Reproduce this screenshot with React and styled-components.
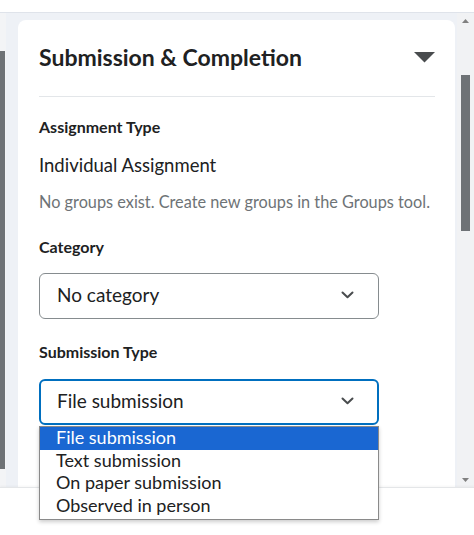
import styled, { createGlobalStyle } from 'styled-components';

const GlobalStyle = createGlobalStyle`
    html, body {
        margin: 0;
        padding: 0;
        background: #ffffff;
        font-family: Lato, "Noto Sans", sans-serif;
        color: #202122;
    }
`;

const Page = styled.div`
    width: 474px;
    height: 535px;
    display: flex;
    flex-direction: column;
    overflow: hidden;
    position: relative;
`;

const TopStrip = styled.div`
    height: 12px;
    flex: none;
    background: #ffffff;
`;

const Pane = styled.div`
    height: 475px;
    flex: none;
    display: flex;
    background: #eef1f6;
    border-top: 1px solid #dfe3ea;
    box-sizing: border-box;
`;

const LeftRail = styled.div`
    width: 6px;
    flex: none;
    background: #f3f4f6;
    padding-top: 38px;
    box-sizing: border-box;
`;

const RailThumb = styled.div`
    width: 5px;
    height: ${({ $h }) => $h}px;
    background: #6e7276;
`;

const CardArea = styled.div`
    flex: 1;
    padding: 7px 2px 0 12px;
`;

const Card = styled.section`
    background: #ffffff;
    border-radius: 8px 8px 0 0;
    padding: 0 20px 0 21px;
    height: 100%;
    box-sizing: border-box;
`;

const CardHeader = styled.div`
    display: flex;
    align-items: center;
    justify-content: space-between;
    padding: 22px 0 24px;
    border-bottom: 1px solid #e3e6e9;
`;

const Title = styled.h2`
    margin: 0;
    font-size: 23px;
    font-weight: 700;
    line-height: 30px;
    color: #202122;
`;

const Body = styled.div`
    display: flex;
    flex-direction: column;
    padding-top: 20px;
    position: relative;
`;

const Label = styled.div`
    font-size: 16px;
    font-weight: 700;
    line-height: 20px;
    color: #202122;
    margin-top: ${({ $mt }) => $mt || 0}px;
`;

const Value = styled.div`
    font-size: 18.5px;
    line-height: 24px;
    margin-top: 16px;
    color: #202122;
`;

const Help = styled.div`
    font-size: 16.3px;
    line-height: 22px;
    margin-top: 14px;
    color: #6e7376;
`;

const SelectWrap = styled.div`
    position: relative;
    width: 340px;
    margin-top: ${({ $mt }) => $mt}px;
`;

const SelectBox = styled.div`
    height: 46px;
    box-sizing: border-box;
    border-radius: 6px;
    border: ${({ $focused }) => ($focused ? '2px solid #006fbf' : '1px solid #868c8f')};
    padding: 0 ${({ $focused }) => ($focused ? 23 : 24)}px 2px
        ${({ $focused }) => ($focused ? 16 : 17)}px;
    display: flex;
    align-items: center;
    justify-content: space-between;
    font-size: 19px;
    line-height: 24px;
    color: #202122;
    background: #ffffff;
`;

const Menu = styled.ul`
    position: absolute;
    top: 47px;
    left: 0;
    width: 340px;
    margin: 0;
    padding: 0 0 2px;
    list-style: none;
    background: #ffffff;
    border: 1px solid #8a8a8a;
    box-sizing: border-box;
    box-shadow: 0 2px 4px rgba(0, 0, 0, 0.2);
    z-index: 5;
`;

const MenuItem = styled.li`
    height: 22.6px;
    line-height: 21px;
    padding-left: 16px;
    font-size: 18px;
    color: ${({ $active }) => ($active ? '#ffffff' : '#202122')};
    background: ${({ $active }) => ($active ? '#1a67d2' : 'transparent')};
`;

const RightBar = styled.div`
    width: 17px;
    flex: none;
    background: #f1f2f4;
    display: flex;
    flex-direction: column;
    align-items: center;
    padding: 6px 0 5px;
    box-sizing: border-box;
`;

const BarThumb = styled.div`
    width: 9px;
    height: 156px;
    background: #6e7276;
    margin-top: 52px;
`;

const BarSpace = styled.div`
    flex: 1;
`;

const Footer = styled.div`
    flex: 1;
    background: #ffffff;
    border-top: 1px solid #e4e6e8;
    box-shadow: 0 -1px 2px rgba(0, 0, 0, 0.04);
`;

const Triangle = () => (
    <svg width="21" height="11" viewBox="0 0 21 11">
        <path d="M0 0 H21 L10.5 10.5 Z" fill="#494c4e" />
    </svg>
);

const Chevron = () => (
    <svg width="13" height="8" viewBox="0 0 13 8">
        <path
            d="M1.5 1.5 L6.5 6.3 L11.5 1.5"
            fill="none"
            stroke="#494c4e"
            strokeWidth="2"
            strokeLinecap="round"
            strokeLinejoin="round"
        />
    </svg>
);

const Arrow = ({ down }) => (
    <svg width="7" height="4" viewBox="0 0 7 4">
        <path d={down ? 'M0 0 H7 L3.5 4 Z' : 'M0 4 H7 L3.5 0 Z'} fill="#808080" />
    </svg>
);

const options = ['File submission', 'Text submission', 'On paper submission', 'Observed in person'];

function App() {
    return (
        <Page>
            <GlobalStyle />
            <TopStrip />
            <Pane>
                <LeftRail>
                    <RailThumb $h={418} />
                </LeftRail>
                <CardArea>
                    <Card>
                        <CardHeader>
                            <Title>Submission &amp; Completion</Title>
                            <Triangle />
                        </CardHeader>
                        <Body>
                            <Label>Assignment Type</Label>
                            <Value>Individual Assignment</Value>
                            <Help>No groups exist. Create new groups in the Groups tool.</Help>
                            <Label $mt={24}>Category</Label>
                            <SelectWrap $mt={16}>
                                <SelectBox>
                                    <span>No category</span>
                                    <Chevron />
                                </SelectBox>
                            </SelectWrap>
                            <Label $mt={23}>Submission Type</Label>
                            <SelectWrap $mt={17}>
                                <SelectBox $focused>
                                    <span>File submission</span>
                                    <Chevron />
                                </SelectBox>
                                <Menu>
                                    {options.map((o, i) => (
                                        <MenuItem key={o} $active={i === 0}>
                                            {o}
                                        </MenuItem>
                                    ))}
                                </Menu>
                            </SelectWrap>
                        </Body>
                    </Card>
                </CardArea>
                <RightBar>
                    <Arrow />
                    <BarThumb />
                    <BarSpace />
                    <Arrow down />
                </RightBar>
            </Pane>
            <Footer />
        </Page>
    );
}

export default App;
